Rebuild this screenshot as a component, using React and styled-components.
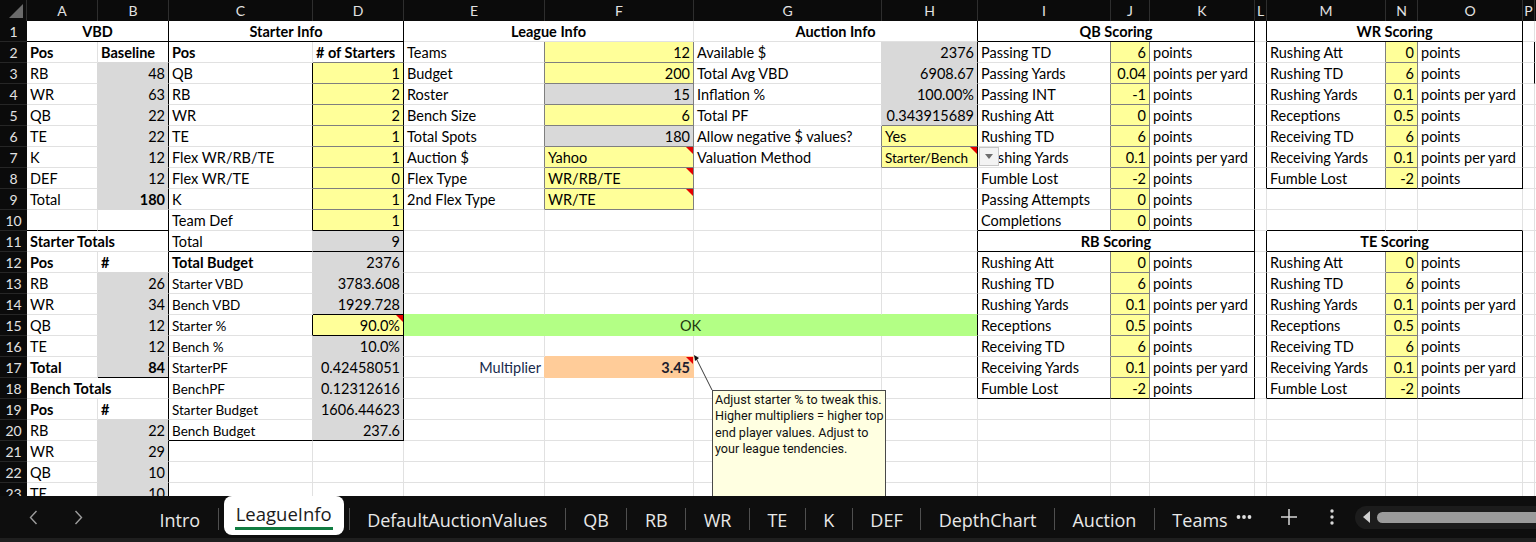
import React from 'react';
import styled, { createGlobalStyle } from 'styled-components';

const GlobalStyle = createGlobalStyle`
  html, body { margin: 0; padding: 0; background: #fff; overflow: hidden; }
  body { width: 1536px; height: 542px; font-family: Lato, "Liberation Sans", sans-serif; }
`;

// column widths A..P, Q takes the rest
const WIDTHS = [71, 71, 144, 91, 141, 149, 188, 96, 133, 39, 105, 12, 119, 32, 105, 12];
const LETTERS = 'ABCDEFGHIJKLMNOP'.split('');
const ROWS = 23;
const NCOLS = 17;

const GRID = '#e1e1e1';
const INK = '#000';
const EDGE = '#7f7f7f';
const YELLOW = '#ffff99';
const GREY = '#d9d9d9';
const GREEN = '#b3ff85';
const PEACH = '#ffcc99';

const ALIGN = { left: 'flex-start', right: 'flex-end', center: 'center' };

/* ---------- sheet contents ---------- */
const cells = {};
const at = ref => {
  const m = /([A-Q])(\d+)/.exec(ref);
  return [+m[2], m[1].charCodeAt(0) - 64];
};
const put = (ref, text, o = {}) => {
  const [r, c] = at(ref);
  cells[`${r}:${c}`] = { text, span: 1, align: 'left', ...o };
};
const num = (ref, text, o = {}) => put(ref, text, { align: 'right', ...o });
const head = (ref, text, span) => put(ref, text, { span, bold: true, align: 'center' });
const B = { bold: true };

// VBD
head('A1', 'VBD', 2);
put('A2', 'Pos', B);
put('B2', 'Baseline', B);
[['RB', '48'], ['WR', '63'], ['QB', '22'], ['TE', '22'], ['K', '12'], ['DEF', '12']].forEach(([p, v], i) => {
  put(`A${3 + i}`, p);
  num(`B${3 + i}`, v, { fill: GREY });
});
put('A9', 'Total');
num('B9', '180', { fill: GREY, bold: true });
put('A11', 'Starter Totals', { bold: true, span: 2 });
put('A12', 'Pos', B);
put('B12', '#', B);
[['RB', '26'], ['WR', '34'], ['QB', '12'], ['TE', '12']].forEach(([p, v], i) => {
  put(`A${13 + i}`, p);
  num(`B${13 + i}`, v, { fill: GREY });
});
put('A17', 'Total', B);
num('B17', '84', { fill: GREY, bold: true });
put('A18', 'Bench Totals', { bold: true, span: 2 });
put('A19', 'Pos', B);
put('B19', '#', B);
[['RB', '22'], ['WR', '29'], ['QB', '10'], ['TE', '10']].forEach(([p, v], i) => {
  put(`A${20 + i}`, p);
  num(`B${20 + i}`, v, { fill: GREY });
});

// Starter info
head('C1', 'Starter Info', 2);
put('C2', 'Pos', B);
put('D2', '# of Starters', B);
[['QB', '1'], ['RB', '2'], ['WR', '2'], ['TE', '1'], ['Flex WR/RB/TE', '1'], ['Flex WR/TE', '0'], ['K', '1'], ['Team Def', '1']].forEach(([p, v], i) => {
  put(`C${3 + i}`, p);
  num(`D${3 + i}`, v, { fill: YELLOW });
});
put('C11', 'Total');
num('D11', '9', { fill: GREY });
put('C12', 'Total Budget', B);
num('D12', '2376', { fill: GREY });
[
  ['Starter VBD', '3783.608'],
  ['Bench VBD', '1929.728'],
  ['Starter %', '90.0%'],
  ['Bench %', '10.0%'],
  ['StarterPF', '0.42458051'],
  ['BenchPF', '0.12312616'],
  ['Starter Budget', '1606.44623'],
  ['Bench Budget', '237.6'],
].forEach(([p, v], i) => {
  const row = 13 + i;
  put(`C${row}`, p, { size: 13.5 });
  num(`D${row}`, v, row === 15 ? { fill: YELLOW, note: true } : { fill: GREY });
});

// League info
head('E1', 'League Info', 2);
[
  ['Teams', '12', YELLOW],
  ['Budget', '200', YELLOW],
  ['Roster', '15', GREY],
  ['Bench Size', '6', YELLOW],
  ['Total Spots', '180', GREY],
].forEach(([p, v, f], i) => {
  put(`E${2 + i}`, p);
  num(`F${2 + i}`, v, { fill: f });
});
[['Auction $', 'Yahoo'], ['Flex Type', 'WR/RB/TE'], ['2nd Flex Type', 'WR/TE']].forEach(([p, v], i) => {
  put(`E${7 + i}`, p);
  put(`F${7 + i}`, v, { fill: YELLOW, note: true });
});

// Auction info
head('G1', 'Auction Info', 2);
[['Available $', '2376'], ['Total Avg VBD', '6908.67'], ['Inflation %', '100.00%'], ['Total PF', '0.343915689']].forEach(([p, v], i) => {
  put(`G${2 + i}`, p);
  num(`H${2 + i}`, v, { fill: GREY });
});
put('G6', 'Allow negative $ values?');
put('H6', 'Yes', { fill: YELLOW });
put('G7', 'Valuation Method');
put('H7', 'Starter/Bench', { fill: YELLOW, note: true, size: 13.5 });

put('E15', 'OK', { span: 4, align: 'center', fill: GREEN, color: '#1f3a10' });
num('E17', 'Multiplier', { color: '#172a4c' });
num('F17', '3.45', { fill: PEACH, bold: true, note: true, color: '#1c1c2e' });

// Scoring tables
const QB = [
  ['Passing TD', '6', 'points'],
  ['Passing Yards', '0.04', 'points per yard'],
  ['Passing INT', '-1', 'points'],
  ['Rushing Att', '0', 'points'],
  ['Rushing TD', '6', 'points'],
  ['Rushing Yards', '0.1', 'points per yard'],
  ['Fumble Lost', '-2', 'points'],
  ['Passing Attempts', '0', 'points'],
  ['Completions', '0', 'points'],
];
const SKILL = [
  ['Rushing Att', '0', 'points'],
  ['Rushing TD', '6', 'points'],
  ['Rushing Yards', '0.1', 'points per yard'],
  ['Receptions', '0.5', 'points'],
  ['Receiving TD', '6', 'points'],
  ['Receiving Yards', '0.1', 'points per yard'],
  ['Fumble Lost', '-2', 'points'],
];
const scoring = (cols, row, title, list) => {
  const [a, b, c] = cols;
  head(`${a}${row}`, title, 3);
  list.forEach(([label, v, unit], i) => {
    put(`${a}${row + 1 + i}`, label);
    num(`${b}${row + 1 + i}`, v, { fill: YELLOW });
    put(`${c}${row + 1 + i}`, unit);
  });
};
scoring('IJK', 1, 'QB Scoring', QB);
scoring('MNO', 1, 'WR Scoring', SKILL);
scoring('IJK', 11, 'RB Scoring', SKILL);
scoring('MNO', 11, 'TE Scoring', SKILL);

/* ---------- borders ---------- */
const V = {}; // line to the right of a column
const H = {}; // line below a row
const vline = (col, r1, r2, color) => { for (let r = r1; r <= r2; r++) V[`${r}:${col}`] = color; };
const hline = (row, c1, c2, color) => { for (let c = c1; c <= c2; c++) H[`${row}:${c}`] = color; };
const box = (r1, c1, r2, c2, color) => {
  hline(r1 - 1, c1, c2, color);
  hline(r2, c1, c2, color);
  vline(c1 - 1, r1, r2, color);
  vline(c2, r1, r2, color);
};
const inputs = (r1, c1, r2, c2) => {
  for (let r = r1; r <= r2; r++) for (let c = c1; c <= c2; c++) box(r, c, r, c, EDGE);
};

inputs(3, 4, 10, 4);
inputs(2, 6, 9, 6);
inputs(6, 8, 7, 8);
inputs(2, 10, 10, 10);
inputs(12, 10, 18, 10);
inputs(2, 14, 8, 14);
inputs(12, 14, 18, 14);

vline(2, 1, 23, INK);
vline(4, 1, 20, INK);
vline(3, 3, 10, INK);
hline(1, 1, 4, INK);
hline(10, 1, 2, INK);
hline(10, 4, 4, INK);
hline(11, 3, 4, INK);
hline(17, 2, 2, INK);
hline(20, 3, 4, INK);
box(15, 4, 15, 4, INK);

box(1, 9, 10, 11, INK);
hline(1, 9, 11, INK);
box(11, 9, 18, 11, INK);
hline(11, 9, 11, INK);
box(1, 13, 8, 15, INK);
hline(1, 13, 15, INK);
box(11, 13, 18, 15, INK);
hline(11, 13, 15, INK);
vline(16, 2, 3, INK);

/* ---------- layout ---------- */
const fills = {};
const covered = new Set();
Object.entries(cells).forEach(([k, d]) => {
  const [r, c] = k.split(':').map(Number);
  for (let i = 0; i < d.span; i++) {
    if (d.fill) fills[`${r}:${c + i}`] = d.fill;
    if (i > 0) covered.add(`${r}:${c + i}`);
  }
});

const Sheet = styled.div`
  position: relative;
  height: 496px;
  overflow: hidden;
  display: grid;
  grid-template-columns: 27px ${WIDTHS.map(w => `${w}px`).join(' ')} 1fr;
  grid-template-rows: repeat(${ROWS + 1}, 21px);
`;

const ColHead = styled.div`
  grid-row: 1;
  grid-column: ${p => p.$col + 1};
  background: #0b0b0b;
  color: #e2e2e2;
  font-size: 14px;
  display: flex;
  align-items: center;
  justify-content: center;
  border-right: 1px solid #2e2e2e;
  overflow: hidden;
`;

const Corner = styled(ColHead)`
  grid-column: 1;
  justify-content: flex-end;
  align-items: flex-end;
  padding: 0 3px 3px 0;
`;

const RowHead = styled.div`
  grid-row: ${p => p.$row + 1};
  grid-column: 1;
  background: #0b0b0b;
  color: #e2e2e2;
  font-size: 14px;
  display: flex;
  align-items: center;
  justify-content: center;
  border-bottom: 1px solid #262626;
`;

const Cell = styled.div`
  grid-row: ${p => p.$row + 1};
  grid-column: ${p => p.$col + 1} / span ${p => p.$span};
  position: relative;
  box-sizing: border-box;
  display: flex;
  align-items: center;
  justify-content: ${p => ALIGN[p.$align]};
  padding: 1px 3px 0;
  background: ${p => p.$fill || '#fff'};
  border-right: 1px solid ${p => p.$rb};
  border-bottom: 1px solid ${p => p.$bb};
  color: ${p => p.$color || '#000'};
  font-size: ${p => p.$size || 14.5}px;
  font-weight: ${p => (p.$bold ? 700 : 400)};
  white-space: nowrap;
  overflow: hidden;

  &::after {
    content: '';
    display: ${p => (p.$note ? 'block' : 'none')};
    position: absolute;
    top: 0;
    right: 0;
    border-top: 7px solid #e60000;
    border-left: 7px solid transparent;
  }
`;

const Comment = styled.div`
  position: absolute;
  left: 712px;
  top: 390px;
  width: 174px;
  height: 130px;
  box-sizing: border-box;
  padding: 1px 2px;
  background: #ffffe1;
  border: 1px solid #4a4a4a;
  font-family: Roboto, "Liberation Sans", sans-serif;
  font-size: 12.6px;
  line-height: 16.4px;
  color: #111;
  white-space: nowrap;
`;

const Leader = styled.svg`
  position: absolute;
  left: 690px;
  top: 352px;
`;

const DropButton = styled.div`
  position: absolute;
  left: 979px;
  top: 147px;
  width: 20px;
  height: 19px;
  box-sizing: border-box;
  background: #f3f3f3;
  border: 1px solid #c6c6c6;
  display: flex;
  align-items: center;
  justify-content: center;

  &::before {
    content: '';
    border-top: 5px solid #6d6d6d;
    border-left: 4px solid transparent;
    border-right: 4px solid transparent;
  }
`;

/* ---------- sheet tabs ---------- */
const TabBar = styled.div`
  height: 42px;
  background: #0e0e0e;
  border-bottom: 4px solid #1f1f1f;
  display: flex;
  align-items: stretch;
  font-family: "Open Sans", "Noto Sans", sans-serif;
  color: #e8e8e8;
`;

const Nav = styled.div`
  width: 142px;
  flex-shrink: 0;
  display: flex;
  align-items: center;
  padding-left: 29px;
  gap: 36px;
  box-sizing: border-box;
`;

const Tabs = styled.div`
  flex: 1;
  display: flex;
  align-items: center;
  overflow: hidden;
`;

const Tab = styled.div`
  padding: 5px 17.5px 0;
  font-size: 18px;
  flex-shrink: 0;
  align-self: stretch;
  display: flex;
  align-items: center;
`;

const ActiveTab = styled.div`
  position: relative;
  flex-shrink: 0;
  align-self: flex-start;
  height: 39px;
  margin: 0 5px;
  padding: 0 12px 4px;
  box-sizing: border-box;
  border-radius: 8px;
  background: #fff;
  color: #1b1b1b;
  font-size: 18.5px;
  display: flex;
  align-items: center;

  &::after {
    content: '';
    position: absolute;
    left: 11px;
    right: 11px;
    bottom: 5px;
    height: 3px;
    background: #107c41;
  }
`;

const Sep = styled.div`
  width: 1px;
  height: 22px;
  margin-top: 4px;
  background: #4f4f4f;
  flex-shrink: 0;
`;

const Controls = styled.div`
  width: 306px;
  flex-shrink: 0;
  display: flex;
  align-items: center;
`;

const Icon = styled.svg`
  flex-shrink: 0;
  margin-left: ${p => p.$gap}px;
`;

const Scroll = styled.div`
  margin-left: 20px;
  width: 200px;
  height: 23px;
  flex-shrink: 0;
  border-radius: 12px;
  background: #1c1c1c;
  display: flex;
  align-items: center;
  padding-left: 8px;
  box-sizing: border-box;

  &::before {
    content: '';
    border-right: 7px solid #d0d0d0;
    border-top: 6px solid transparent;
    border-bottom: 6px solid transparent;
  }
`;

const Thumb = styled.div`
  margin-left: 7px;
  flex: 1;
  height: 11px;
  border-radius: 6px;
  background: #9b9b9b;
`;

const Chevron = ({ dir }) => (
  <svg width="9" height="15" viewBox="0 0 9 15">
    <polyline
      points={dir === 'left' ? '7.5,1 1.5,7.5 7.5,14' : '1.5,1 7.5,7.5 1.5,14'}
      fill="none"
      stroke="#9c9c9c"
      strokeWidth="1.4"
    />
  </svg>
);

const SHEETS = ['Intro', 'LeagueInfo', 'DefaultAuctionValues', 'QB', 'RB', 'WR', 'TE', 'K', 'DEF', 'DepthChart', 'Auction', 'Teams'];
const ACTIVE = 'LeagueInfo';

const NOTE = [
  'Adjust starter % to tweak this.',
  'Higher multipliers = higher top',
  'end player values. Adjust to',
  'your league tendencies.',
];

export default function App() {
  const body = [];
  for (let r = 1; r <= ROWS; r++) {
    body.push(<RowHead key={`h${r}`} $row={r}>{r}</RowHead>);
    for (let c = 1; c <= NCOLS; c++) {
      const key = `${r}:${c}`;
      if (covered.has(key)) continue;
      const d = cells[key] || { span: 1, align: 'left' };
      const last = c + d.span - 1;
      const rb = V[`${r}:${last}`] || d.fill || fills[`${r}:${last + 1}`] || GRID;
      const bb = H[`${r}:${c}`] || d.fill || fills[`${r + 1}:${c}`] || GRID;
      body.push(
        <Cell
          key={key}
          $row={r}
          $col={c}
          $span={d.span}
          $align={d.align}
          $fill={d.fill}
          $bold={d.bold}
          $size={d.size}
          $color={d.color}
          $note={d.note}
          $rb={rb}
          $bb={bb}
        >
          {d.text}
        </Cell>
      );
    }
  }

  return (
    <>
      <GlobalStyle />
      <Sheet>
        <Corner>
          <svg width="14" height="14" viewBox="0 0 14 14">
            <polygon points="14,0 14,14 0,14" fill="#6a6a6a" />
          </svg>
        </Corner>
        {LETTERS.map((l, i) => (
          <ColHead key={l} $col={i + 1}>{l}</ColHead>
        ))}
        <ColHead $col={17} />
        {body}

        <DropButton />
        <Leader width="28" height="42" viewBox="0 0 28 42">
          <line x1="6" y1="6" x2="22" y2="38" stroke="#3a3a3a" strokeWidth="1" />
          <polygon points="4,3 9,6 5,9" fill="#111" />
        </Leader>
        <Comment>
          {NOTE.map(line => (
            <div key={line}>{line}</div>
          ))}
        </Comment>
      </Sheet>

      <TabBar>
        <Nav>
          <Chevron dir="left" />
          <Chevron dir="right" />
        </Nav>
        <Tabs>
          {SHEETS.map((name, i) => {
            const prevActive = SHEETS[i - 1] === ACTIVE;
            return (
              <React.Fragment key={name}>
                {i > 0 && name !== ACTIVE && !prevActive && <Sep />}
                {name === ACTIVE ? (
                  <>
                    <Sep />
                    <ActiveTab>{name}</ActiveTab>
                    <Sep />
                  </>
                ) : (
                  <Tab>{name}</Tab>
                )}
              </React.Fragment>
            );
          })}
        </Tabs>
        <Controls>
          <Icon $gap={6} width="16" height="6" viewBox="0 0 16 6">
            <circle cx="2.5" cy="3" r="1.9" fill="#e0e0e0" />
            <circle cx="8" cy="3" r="1.9" fill="#e0e0e0" />
            <circle cx="13.5" cy="3" r="1.9" fill="#e0e0e0" />
          </Icon>
          <Icon $gap={28} width="18" height="18" viewBox="0 0 18 18">
            <path d="M9 1v16M1 9h16" stroke="#d8d8d8" strokeWidth="1.5" />
          </Icon>
          <Icon $gap={31} width="6" height="18" viewBox="0 0 6 18">
            <circle cx="3" cy="3" r="1.7" fill="#d8d8d8" />
            <circle cx="3" cy="9" r="1.7" fill="#d8d8d8" />
            <circle cx="3" cy="15" r="1.7" fill="#d8d8d8" />
          </Icon>
          <Scroll>
            <Thumb />
          </Scroll>
        </Controls>
      </TabBar>
    </>
  );
}
